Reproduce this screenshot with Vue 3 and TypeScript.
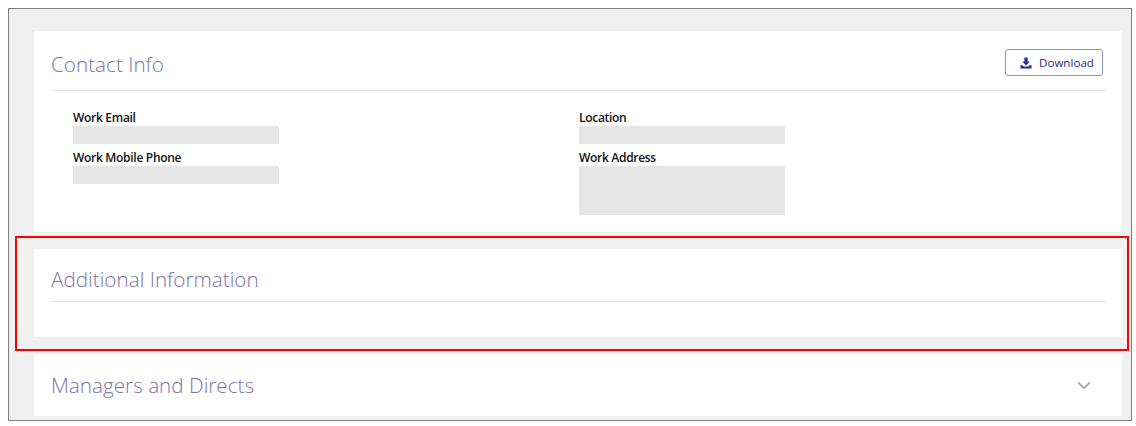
<script setup lang="ts">
interface Field { label: string; tall?: boolean }
const columns: Field[][] = [
  [{ label: 'Work Email' }, { label: 'Work Mobile Phone' }],
  [{ label: 'Location' }, { label: 'Work Address', tall: true }],
]
</script>

<template>
  <div class="page">
    <div class="frame">
      <section class="card card-contact">
        <header class="head">
          <h2 class="title">Contact Info</h2>
          <button class="download" type="button">
            <svg class="dl-icon" viewBox="0 0 12 12" width="12" height="12" aria-hidden="true">
              <path d="M4.4 0.4h3.2v4.2h2.2L6 8.4 2.2 4.6h2.2z" fill="#25348a" />
              <path d="M0.4 8.2h2.2l1.3 1.4h4.2l1.3-1.4h2.2v3.4H0.4z" fill="#25348a" />
            </svg>
            <span>Download</span>
          </button>
        </header>
        <div class="fields">
          <div v-for="(col, i) in columns" :key="i" class="col">
            <div v-for="f in col" :key="f.label" class="field">
              <div class="label">{{ f.label }}</div>
              <div class="value" :class="{ tall: f.tall }"></div>
            </div>
          </div>
        </div>
      </section>

      <section class="card card-additional">
        <header class="head head-plain">
          <h2 class="title">Additional Information</h2>
        </header>
      </section>

      <section class="card card-managers">
        <h2 class="title">Managers and Directs</h2>
        <svg class="chevron" viewBox="0 0 14 9" width="14" height="9" aria-hidden="true">
          <path d="M1 1.2l6 6 6-6" fill="none" stroke="#9a9a9a" stroke-width="1.6" />
        </svg>
      </section>

      <div class="highlight"></div>
    </div>
  </div>
</template>

<style>
html, body { margin: 0; background: #fff; }
</style>

<style scoped>
.page {
  width: 1136px;
  height: 426px;
  padding: 8px 4px 5px 8px;
  box-sizing: border-box;
  overflow: hidden;
  font-family: "Open Sans", "Liberation Sans", sans-serif;
}
.frame {
  position: relative;
  box-sizing: border-box;
  height: 413px;
  border: 1px solid #7f7f7f;
  background: #f0f0f0;
  padding: 22px 9px 0 25px;
  display: flex;
  flex-direction: column;
  gap: 17px;
}
.card {
  background: #fff;
  box-sizing: border-box;
  padding: 0 16px 0 17px;
}
.card-contact { height: 201px; }
.card-additional { height: 88px; }
.card-managers {
  height: 62px;
  display: flex;
  align-items: center;
  justify-content: space-between;
  padding-right: 31px;
}
.head {
  height: 60px;
  box-sizing: border-box;
  padding: 7px 3px 0 0;
  border-bottom: 1px solid #e8e9ee;
  display: flex;
  align-items: center;
  justify-content: space-between;
}
.head-plain { height: 53px; padding-top: 8px; border-bottom-color: #e3e6f0; }
.title {
  margin: 0;
  font-size: 20.7px;
  font-weight: 300;
  color: #7b74a8;
  line-height: 30px;
}
.download {
  width: 98px;
  height: 27px;
  margin-top: -3px;
  box-sizing: border-box;
  border: 1px solid #8a93c4;
  border-radius: 3px;
  background: #fff;
  display: flex;
  align-items: center;
  justify-content: flex-start;
  gap: 7px;
  padding: 0 0 0 14px;
  font-family: inherit;
  font-size: 11.6px;
  font-weight: 400;
  color: #1f2d85;
}
.dl-icon { flex: none; }
.fields {
  display: grid;
  grid-template-columns: 506px 1fr;
  padding: 19px 0 0 22px;
}
.col {
  display: flex;
  flex-direction: column;
  gap: 6px;
}
.field { display: flex; flex-direction: column; }
.label {
  font-size: 12px;
  font-weight: 600;
  letter-spacing: -0.3px;
  line-height: 16px;
  color: #111;
}
.value {
  width: 206px;
  height: 18px;
  background: #e5e5e5;
}
.value.tall { height: 49px; }
.highlight {
  position: absolute;
  left: 6px;
  top: 227px;
  width: 1114px;
  height: 115px;
  box-sizing: border-box;
  border: 2px solid #f00;
  pointer-events: none;
}
</style>
